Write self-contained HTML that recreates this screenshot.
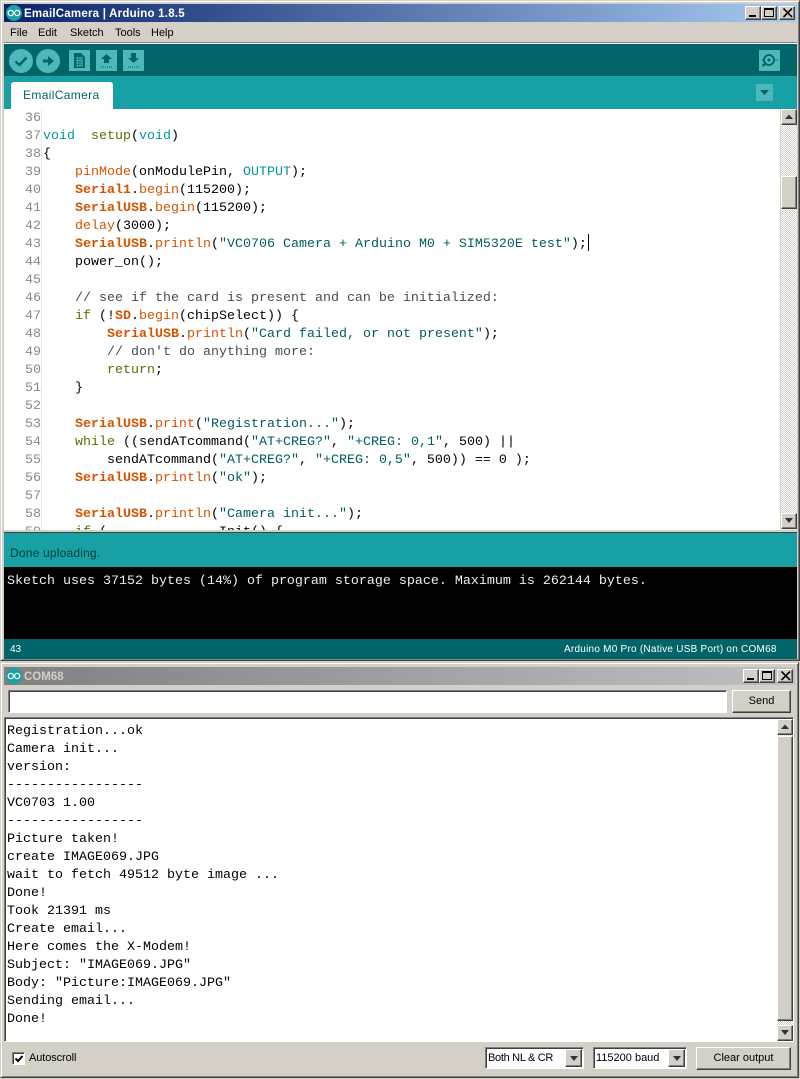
<!DOCTYPE html>
<html><head><meta charset="utf-8"><style>
*{box-sizing:border-box}
html,body{margin:0;padding:0;width:800px;height:1079px;overflow:hidden;background:#d4d0c8}
.a{position:absolute}
body{position:relative;font-family:"Liberation Sans",sans-serif;font-size:11px;color:#000}
.l{position:absolute;white-space:pre;font-family:"Liberation Mono",monospace;font-size:13.33px;line-height:18px;height:18px;margin-top:2px}
.n{position:absolute;left:4px;width:33px;text-align:right;font-family:"Liberation Mono",monospace;font-size:13.33px;line-height:18px;color:#888;margin-top:2px}
.o{color:#d35400}.b{color:#d35400;font-weight:bold}.t{color:#00979c}.s{color:#005c5f}.g{color:#5e6d03}.c{color:#434f54}.k{color:#000}
.btn{position:absolute;background:#d4d0c8;border:1px solid;border-color:#fff #404040 #404040 #fff;box-shadow:inset -1px -1px 0 #808080}
.ico{position:absolute;background:#4db7bb}
.round{position:absolute;width:24px;height:24px;border-radius:50%;background:#4db7bb}
.chk{background-image:conic-gradient(#d4d0c8 25%,#fff 0 50%,#d4d0c8 0 75%,#fff 0);background-size:2px 2px}
.sunk{position:absolute;border:1px solid;border-color:#808080 #fff #fff #808080;box-shadow:inset 1px 1px 0 #404040}
</style></head><body>

<!-- window 1 frame -->
<div class="a" style="left:0;top:0;width:800px;height:661px;background:#d4d0c8;border:1px solid;border-color:#d4d0c8 #404040 #404040 #d4d0c8;box-shadow:inset 1px 1px 0 #fff,inset -1px -1px 0 #808080"></div>
<div class="a" style="left:4px;top:4px;width:793px;height:18px;background:linear-gradient(90deg,#0a246a,#a6caf0)"></div>
<svg class="a" style="left:6px;top:5px" width="16" height="16" viewBox="0 0 16 16"><circle cx="8" cy="8" r="8" fill="#17a1a5"/><circle cx="4.8" cy="8" r="2.6" fill="none" stroke="#fff" stroke-width="1.2"/><circle cx="11.2" cy="8" r="2.6" fill="none" stroke="#fff" stroke-width="1.2"/></svg>
<div class="a" style="left:24px;top:5px;line-height:18px;color:#fff;font-weight:bold;font-size:11.5px;letter-spacing:.22px;white-space:pre">EmailCamera | Arduino 1.8.5</div>
<div class="btn" style="left:745px;top:6px;width:16px;height:14px"><div class="a" style="left:3px;top:8px;width:7px;height:2px;background:#000"></div></div>
<div class="btn" style="left:761px;top:6px;width:16px;height:14px"><div class="a" style="left:2px;top:1px;width:10px;height:9px;border:1px solid #000;border-top-width:2px"></div></div>
<div class="btn" style="left:779px;top:6px;width:16px;height:14px"><svg class="a" style="left:3px;top:1px" width="10" height="10"><path d="M.5 .5L9 9M9 .5L.5 9" stroke="#000" stroke-width="1.6"/></svg></div>

<div class="a" style="left:10px;top:24px;line-height:18px;white-space:pre;word-spacing:0">File</div>
<div class="a" style="left:38px;top:24px;line-height:18px">Edit</div>
<div class="a" style="left:70px;top:24px;line-height:18px">Sketch</div>
<div class="a" style="left:115px;top:24px;line-height:18px">Tools</div>
<div class="a" style="left:151px;top:24px;line-height:18px">Help</div>
<div class="a" style="left:4px;top:42px;width:793px;height:1px;background:#808080"></div>
<div class="a" style="left:4px;top:43px;width:793px;height:1px;background:#fff"></div>

<!-- toolbar -->
<div class="a" style="left:4px;top:44px;width:793px;height:32px;background:#006468"></div>
<div class="round" style="left:9px;top:49px"></div>
<svg class="a" style="left:9px;top:49px" width="24" height="24"><path d="M6.5 12.5L10.5 16L17.5 8.5" fill="none" stroke="#006468" stroke-width="2.4"/></svg>
<div class="round" style="left:36px;top:49px"></div>
<svg class="a" style="left:36px;top:49px" width="24" height="24"><path d="M7 10.5h5V7l6 5-6 5v-3.5H7z" fill="#006468"/></svg>
<div class="ico" style="left:69px;top:50px;width:21px;height:21px"></div>
<svg class="a" style="left:69px;top:50px" width="21" height="21"><path d="M5 3h7l4 4v11H5z" fill="#006468"/><path d="M7 8h7M7 10.500h7M7 13h7M7 15.500h7M8.500 7v10M11 7v10M13 7v10" stroke="#4db7bb" stroke-width=".7"/></svg>
<div class="ico" style="left:96px;top:50px;width:21px;height:21px"></div>
<svg class="a" style="left:96px;top:50px" width="21" height="21"><path d="M10.500 4l5.500 5h-3v4H8V9H5z" fill="#006468"/><path d="M5 17h11" stroke="#006468" stroke-width="1" stroke-dasharray="1 1"/></svg>
<div class="ico" style="left:123px;top:50px;width:21px;height:21px"></div>
<svg class="a" style="left:123px;top:50px" width="21" height="21"><path d="M8 3h5v5h3l-5.500 5L5 8h3z" fill="#006468"/><path d="M5 17h11" stroke="#006468" stroke-width="1" stroke-dasharray="1 1"/></svg>
<div class="ico" style="left:759px;top:50px;width:21px;height:21px"></div>
<svg class="a" style="left:759px;top:50px" width="21" height="21"><circle cx="10" cy="10" r="5" fill="none" stroke="#006468" stroke-width="1.800"/><circle cx="10" cy="10" r="1.500" fill="#006468"/><path d="M6.500 13.500L3.500 16" stroke="#006468" stroke-width="2.400"/><path d="M3 10h1M16.500 10h3" stroke="#006468" stroke-dasharray="1 1"/></svg>

<!-- tab bar -->
<div class="a" style="left:4px;top:76px;width:793px;height:33px;background:#17a1a5"></div>
<div class="a" style="left:11px;top:82px;width:102px;height:27px;background:#fff;border-radius:3px 3px 0 0"></div>
<div class="a" style="left:23px;top:86px;line-height:18px;font-size:12px;letter-spacing:.35px;color:#006468">EmailCamera</div>
<div class="a" style="left:756px;top:84px;width:17px;height:17px;background:#4db7bb"></div>
<svg class="a" style="left:756px;top:84px" width="17" height="17"><path d="M4 6h9l-4.500 5z" fill="#006468"/></svg>

<!-- editor -->
<div class="a" style="left:4px;top:109px;width:776px;height:421px;background:#fff;overflow:hidden" id="ed">
<div class="a" style="left:37px;top:0;width:1px;height:421px;background:#e8e8e8"></div>
<div class="n" style="top:-1px">36</div>
<div class="n" style="top:17px">37</div><div class="l" style="left:39px;top:17px"><span class="t">void</span>  <span class="g">setup</span>(<span class="t">void</span>)</div>
<div class="n" style="top:35px">38</div><div class="l" style="left:39px;top:35px">{</div>
<div class="n" style="top:53px">39</div><div class="l" style="left:39px;top:53px">    <span class="o">pinMode</span>(onModulePin, <span class="t">OUTPUT</span>);</div>
<div class="n" style="top:71px">40</div><div class="l" style="left:39px;top:71px">    <span class="b">Serial1</span>.<span class="o">begin</span>(115200);</div>
<div class="n" style="top:89px">41</div><div class="l" style="left:39px;top:89px">    <span class="b">SerialUSB</span>.<span class="o">begin</span>(115200);</div>
<div class="n" style="top:107px">42</div><div class="l" style="left:39px;top:107px">    <span class="o">delay</span>(3000);</div>
<div class="n" style="top:125px">43</div><div class="l" style="left:39px;top:125px">    <span class="b">SerialUSB</span>.<span class="o">println</span>(<span class="s">"VC0706 Camera + Arduino M0 + SIM5320E test"</span>);</div>
<div class="a" style="left:584px;top:125px;width:1px;height:17px;background:#000"></div>
<div class="n" style="top:143px">44</div><div class="l" style="left:39px;top:143px">    power_on();</div>
<div class="n" style="top:161px">45</div>
<div class="n" style="top:179px">46</div><div class="l" style="left:39px;top:179px">    <span class="c">// see if the card is present and can be initialized:</span></div>
<div class="n" style="top:197px">47</div><div class="l" style="left:39px;top:197px">    <span class="g">if</span> (!<span class="b">SD</span>.<span class="o">begin</span>(chipSelect)) {</div>
<div class="n" style="top:215px">48</div><div class="l" style="left:39px;top:215px">        <span class="b">SerialUSB</span>.<span class="o">println</span>(<span class="s">"Card failed, or not present"</span>);</div>
<div class="n" style="top:233px">49</div><div class="l" style="left:39px;top:233px">        <span class="c">// don't do anything more:</span></div>
<div class="n" style="top:251px">50</div><div class="l" style="left:39px;top:251px">        <span class="g">return</span>;</div>
<div class="n" style="top:269px">51</div><div class="l" style="left:39px;top:269px">    }</div>
<div class="n" style="top:287px">52</div>
<div class="n" style="top:305px">53</div><div class="l" style="left:39px;top:305px">    <span class="b">SerialUSB</span>.<span class="o">print</span>(<span class="s">"Registration..."</span>);</div>
<div class="n" style="top:323px">54</div><div class="l" style="left:39px;top:323px">    <span class="g">while</span> ((sendATcommand(<span class="s">"AT+CREG?"</span>, <span class="s">"+CREG: 0,1"</span>, 500) ||</div>
<div class="n" style="top:341px">55</div><div class="l" style="left:39px;top:341px">        sendATcommand(<span class="s">"AT+CREG?"</span>, <span class="s">"+CREG: 0,5"</span>, 500)) == 0 );</div>
<div class="n" style="top:359px">56</div><div class="l" style="left:39px;top:359px">    <span class="b">SerialUSB</span>.<span class="o">println</span>(<span class="s">"ok"</span>);</div>
<div class="n" style="top:377px">57</div>
<div class="n" style="top:395px">58</div><div class="l" style="left:39px;top:395px">    <span class="b">SerialUSB</span>.<span class="o">println</span>(<span class="s">"Camera init..."</span>);</div>
<div class="n" style="top:413px">59</div><div class="l" style="left:39px;top:413px">    <span class="g">if</span> (              Init() {</div>
</div>
<!-- editor scrollbar -->
<div class="a chk" style="left:781px;top:109px;width:16px;height:421px"></div>
<div class="btn" style="left:781px;top:109px;width:16px;height:16px"><svg class="a" style="left:3px;top:4px" width="9" height="6"><path d="M4 0.500L8 5H0z" fill="#333"/></svg></div>
<div class="btn" style="left:781px;top:176px;width:16px;height:33px"></div>
<div class="btn" style="left:781px;top:513px;width:16px;height:16px"><svg class="a" style="left:3px;top:4px" width="9" height="6"><path d="M0 0H8L4 5z" fill="#333"/></svg></div>

<!-- status -->
<div class="a" style="left:4px;top:532px;width:793px;height:1px;background:#404040"></div>
<div class="a" style="left:4px;top:533px;width:793px;height:34px;background:#17a1a5"></div>
<div class="a" style="left:10px;top:544px;line-height:18px;font-size:12px;letter-spacing:.2px;color:#003c3e">Done uploading.</div>
<div class="a" style="left:4px;top:567px;width:793px;height:72px;background:#000"></div>
<div class="l" style="left:7px;top:571px;color:#eee">Sketch uses 37152 bytes (14%) of program storage space. Maximum is 262144 bytes.</div>
<div class="a" style="left:4px;top:639px;width:793px;height:20px;background:#006468"></div>
<div class="a" style="left:10px;top:641px;line-height:18px;font-size:10px;color:#fff">43</div>
<div class="a" style="left:564px;top:641px;line-height:18px;font-size:10px;color:#fff;letter-spacing:.24px;white-space:pre">Arduino M0 Pro (Native USB Port) on COM68</div>

<!-- window 2 frame -->
<div class="a" style="left:0;top:662px;width:799px;height:416px;background:#d4d0c8;border:1px solid;border-color:#d4d0c8 #404040 #404040 #d4d0c8;box-shadow:inset 1px 1px 0 #fff,inset -1px -1px 0 #808080"></div>
<div class="a" style="left:4px;top:667px;width:791px;height:18px;background:linear-gradient(90deg,#808080,#c0c0c0)"></div>
<svg class="a" style="left:6px;top:668px" width="16" height="16" viewBox="0 0 16 16"><circle cx="8" cy="8" r="8" fill="#17a1a5"/><circle cx="4.800" cy="8" r="2.600" fill="none" stroke="#fff" stroke-width="1.200"/><circle cx="11.200" cy="8" r="2.600" fill="none" stroke="#fff" stroke-width="1.200"/></svg>
<div class="a" style="left:24px;top:668px;line-height:18px;color:#d4d0c8;font-weight:bold;font-size:11.500px">COM68</div>
<div class="btn" style="left:743px;top:669px;width:16px;height:14px"><div class="a" style="left:3px;top:8px;width:7px;height:2px;background:#000"></div></div>
<div class="btn" style="left:759px;top:669px;width:16px;height:14px"><div class="a" style="left:2px;top:1px;width:10px;height:9px;border:1px solid #000;border-top-width:2px"></div></div>
<div class="btn" style="left:777px;top:669px;width:16px;height:14px"><svg class="a" style="left:3px;top:1px" width="10" height="10"><path d="M.5 .5L9 9M9 .5L.5 9" stroke="#000" stroke-width="1.600"/></svg></div>

<div class="sunk" style="left:8px;top:690px;width:719px;height:23px;background:#fff"></div>
<div class="btn" style="left:732px;top:690px;width:59px;height:23px;text-align:center;line-height:21px">Send</div>

<!-- serial output -->
<div class="sunk" style="left:4px;top:717px;width:790px;height:325px;background:#fff"></div>
<div class="l" style="left:7px;top:721px">Registration...ok</div>
<div class="l" style="left:7px;top:739px">Camera init...</div>
<div class="l" style="left:7px;top:757px">version:</div>
<div class="l" style="left:7px;top:775px">-----------------</div>
<div class="l" style="left:7px;top:793px">VC0703 1.00</div>
<div class="l" style="left:7px;top:811px">-----------------</div>
<div class="l" style="left:7px;top:829px">Picture taken!</div>
<div class="l" style="left:7px;top:847px">create IMAGE069.JPG</div>
<div class="l" style="left:7px;top:865px">wait to fetch 49512 byte image ...</div>
<div class="l" style="left:7px;top:883px">Done!</div>
<div class="l" style="left:7px;top:901px">Took 21391 ms</div>
<div class="l" style="left:7px;top:919px">Create email...</div>
<div class="l" style="left:7px;top:937px">Here comes the X-Modem!</div>
<div class="l" style="left:7px;top:955px">Subject: "IMAGE069.JPG"</div>
<div class="l" style="left:7px;top:973px">Body: "Picture:IMAGE069.JPG"</div>
<div class="l" style="left:7px;top:991px">Sending email...</div>
<div class="l" style="left:7px;top:1009px">Done!</div>
<!-- serial scrollbar -->
<div class="a chk" style="left:777px;top:719px;width:16px;height:322px"></div>
<div class="btn" style="left:777px;top:719px;width:16px;height:16px"><svg class="a" style="left:3px;top:4px" width="9" height="6"><path d="M4 .5L8 5H0z" fill="#333"/></svg></div>
<div class="btn" style="left:777px;top:736px;width:16px;height:285px"></div>
<div class="btn" style="left:777px;top:1025px;width:16px;height:16px"><svg class="a" style="left:3px;top:4px" width="9" height="6"><path d="M0 0H8L4 5z" fill="#333"/></svg></div>

<!-- bottom bar -->
<div class="sunk" style="left:12px;top:1052px;width:13px;height:13px;background:#fff"><svg class="a" style="left:1px;top:1px" width="10" height="10"><path d="M1.500 4.500L4 7L8.500 2" fill="none" stroke="#000" stroke-width="2"/></svg></div>
<div class="a" style="left:29px;top:1049px;line-height:18px;letter-spacing:-.1px;white-space:pre">Autoscroll</div>

<div class="sunk" style="left:485px;top:1047px;width:99px;height:22px;background:#fff"></div>
<div class="a" style="left:488px;top:1049px;line-height:18px;letter-spacing:-.3px;white-space:pre">Both NL &amp; CR</div>
<div class="btn" style="left:565px;top:1049px;width:17px;height:18px"><svg class="a" style="left:4px;top:6px" width="9" height="6"><path d="M0 0H8L4 5z" fill="#333"/></svg></div>

<div class="sunk" style="left:593px;top:1047px;width:94px;height:22px;background:#fff"></div>
<div class="a" style="left:596px;top:1049px;line-height:18px;white-space:pre">115200 baud</div>
<div class="btn" style="left:668px;top:1049px;width:17px;height:18px"><svg class="a" style="left:4px;top:6px" width="9" height="6"><path d="M0 0H8L4 5z" fill="#333"/></svg></div>

<div class="btn" style="left:696px;top:1047px;width:95px;height:23px;text-align:center;line-height:21px">Clear output</div>
</body></html>
